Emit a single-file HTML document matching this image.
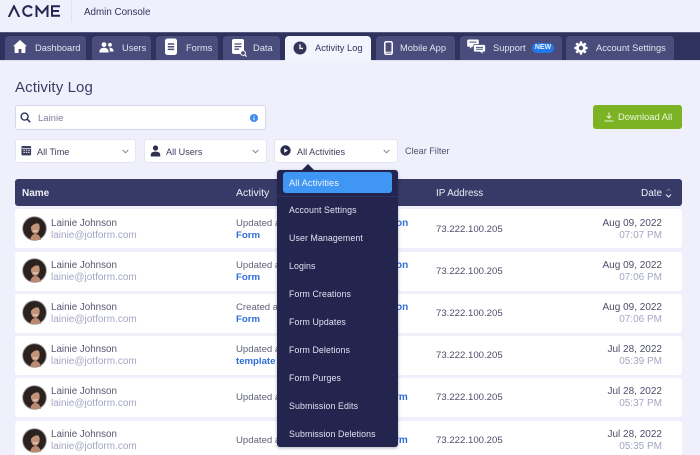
<!DOCTYPE html>
<html><head><meta charset="utf-8"><style>
*{box-sizing:border-box}
html,body{margin:0;padding:0}
html{width:700px;height:455px;overflow:hidden}
body{width:700px;height:455px;overflow:hidden;background:#f0f0fc;position:relative;font-family:"Liberation Sans",sans-serif;color:#343659}
.a{position:absolute;white-space:nowrap}
.tab{position:absolute;top:36px;height:24px;background:#4a4c7b;border-radius:4px 4px 0 0}
.tl{position:absolute;top:41px;margin-top:1px;font-size:9.3px;line-height:14px;color:#e4e4f2;white-space:nowrap}
.box{position:absolute;background:#fff;border:1px solid #dcdcf0;border-radius:3px}
.f{position:absolute;margin-top:1px;font-size:9.1px;line-height:13px;white-space:nowrap;color:#3c3e5e}
.row{position:absolute;left:15px;width:667px;height:39px;background:#fff;border-radius:3px}
.n{position:absolute;left:51px;margin-top:1px;font-size:9.8px;line-height:13px;color:#55576f;white-space:nowrap}
.m{position:absolute;left:51px;margin-top:1px;font-size:10px;line-height:13px;color:#a3a6c4;white-space:nowrap}
.ac{position:absolute;left:236px;margin-top:1px;font-size:9.6px;line-height:13px;color:#60627a;white-space:nowrap}
.lk{position:absolute;left:236px;margin-top:1px;font-size:9.6px;line-height:13px;font-weight:bold;color:#2f6fd8;white-space:nowrap}
.lk2{position:absolute;margin-top:1px;font-size:10px;line-height:13px;font-weight:bold;color:#2f6fd8;white-space:nowrap}
.ip{position:absolute;left:436px;margin-top:1px;font-size:9.6px;line-height:13px;color:#4c4e68;white-space:nowrap}
.d{position:absolute;right:38px;margin-top:1px;width:100px;text-align:right;font-size:10px;line-height:13px;color:#4c4e68}
.t{position:absolute;right:38px;margin-top:1px;width:100px;text-align:right;font-size:10px;line-height:13px;color:#a3a6c4}
.av{position:absolute;left:22px;width:25px;height:25px}
.mi{position:absolute;left:289px;font-size:8.8px;line-height:12px;color:#e2e2f2;white-space:nowrap;letter-spacing:.1px}
</style></head><body>

<svg class="a" style="left:8px;top:5px" width="53" height="12" viewBox="0 0 53 12"><path d="M.8 12L6 1.2L11.2 12" fill="none" stroke="#23264f" stroke-width="2"/><path d="M24 3A4.9 4.9 0 1 0 24 9" fill="none" stroke="#23264f" stroke-width="2"/><path d="M28.5 12V1.5L34 8L39.5 1.5V12" fill="none" stroke="#23264f" stroke-width="2"/><path d="M52 1.2H44V10.8H52M44 6H51" fill="none" stroke="#23264f" stroke-width="2"/></svg>
<div class="a" style="left:71px;top:1px;width:1px;height:21px;background:#e2e2f0"></div>
<div class="a" style="left:84px;top:6px;font-size:9.8px;line-height:14px;color:#30335c">Admin Console</div>

<div class="a" style="left:0;top:32px;width:700px;height:28px;background:#2f325c;border-top:1px solid #55587f"></div>
<div class="a" style="left:0;top:60px;width:700px;height:1px;background:#dedef2"></div>

<div class="tab" style="left:5px;width:81px"></div>
<div class="tab" style="left:92px;width:59px"></div>
<div class="tab" style="left:156px;width:62px"></div>
<div class="tab" style="left:223px;width:57px"></div>
<div class="tab" style="left:285px;width:86px;background:#f4f4fe;height:25px"></div>
<div class="tab" style="left:376px;width:79px"></div>
<div class="tab" style="left:460px;width:102px"></div>
<div class="tab" style="left:566px;width:108px"></div>

<div class="tl" style="left:35px;top:40px">Dashboard</div>
<div class="tl" style="left:122px;top:40px">Users</div>
<div class="tl" style="left:186px;top:40px">Forms</div>
<div class="tl" style="left:253px;top:40px">Data</div>
<div class="tl" style="left:315px;top:40px;color:#30335c">Activity Log</div>
<div class="tl" style="left:400px;top:40px">Mobile App</div>
<div class="tl" style="left:493px;top:40px">Support</div>
<div class="a" style="left:532px;top:43px;width:22px;height:10px;border-radius:5px;background:#2479e8;color:#e8f1ff;font-size:7px;line-height:10px;text-align:center;font-weight:bold">NEW</div>
<div class="tl" style="left:596px;top:40px">Account Settings</div>

<!-- tab icons -->
<svg class="a" style="left:13px;top:40px" width="14" height="13" viewBox="0 0 14 13"><path d="M7 0L14 6.2H12.4V13H8.4V9H5.6V13H1.6V6.2H0Z" fill="#fff"/></svg>
<svg class="a" style="left:99px;top:42px" width="15" height="11" viewBox="0 0 15 11"><circle cx="5" cy="2.6" r="2.4" fill="#fff"/><path d="M0.3 10.5C0.3 7 2.5 5.8 5 5.8S9.7 7 9.7 10.5Z" fill="#fff"/><circle cx="11" cy="2.8" r="1.9" fill="#fff"/><path d="M10.3 5.8C12.5 5.5 14.6 6.6 14.6 9.5H10.8C10.8 8 10.6 6.8 10.3 5.8Z" fill="#fff"/></svg>
<svg class="a" style="left:164px;top:38px" width="14" height="18" viewBox="0 0 14 18"><rect x="1" y="0.5" width="12" height="16.5" rx="2.5" fill="#fff"/><path d="M3.8 6H10.2M3.8 8.7H10.2M3.8 11.4H10.2" stroke="#4a4c7b" stroke-width="1.5"/></svg>
<svg class="a" style="left:231px;top:39px" width="17" height="19" viewBox="0 0 17 19"><rect x="1" y="0" width="12" height="15" rx="2" fill="#fff"/><path d="M3.5 5H10.5M3.5 7.6H10.5M3.5 10.2H8" stroke="#4a4c7b" stroke-width="1.3"/><circle cx="12" cy="14" r="2.4" fill="#4a4c7b" stroke="#fff" stroke-width="1"/><path d="M13.8 15.8L15.6 17.6" stroke="#fff" stroke-width="1.1"/></svg>
<svg class="a" style="left:293px;top:41px" width="14" height="14" viewBox="0 0 14 14"><circle cx="7" cy="7" r="6.5" fill="#343659"/><path d="M7 3.4V7.4H10" fill="none" stroke="#f4f4fe" stroke-width="1.4"/></svg>
<svg class="a" style="left:384px;top:41px" width="9" height="14" viewBox="0 0 9 14"><rect x="0.8" y="0.8" width="7.4" height="12.4" rx="1.4" fill="none" stroke="#fff" stroke-width="1.5"/><path d="M1 11.2H8" stroke="#fff" stroke-width="1"/></svg>
<svg class="a" style="left:467px;top:39px" width="19" height="17" viewBox="0 0 19 17"><path d="M1.5 .5H10.5A1.3 1.3 0 0 1 11.8 1.8V6.5A1.3 1.3 0 0 1 10.5 7.8H5L3 9.8V7.8H1.5A1.3 1.3 0 0 1 .2 6.5V1.8A1.3 1.3 0 0 1 1.5 .5Z" fill="#fff"/><path d="M2.5 3.1H9.5" stroke="#4a4c7b" stroke-width="1"/><path d="M8 5.5H17A1.5 1.5 0 0 1 18.5 7V11.5A1.5 1.5 0 0 1 17 13H15.8V15.6L13 13H8A1.5 1.5 0 0 1 6.5 11.5V7A1.5 1.5 0 0 1 8 5.5Z" fill="#fff" stroke="#4a4c7b" stroke-width=".7"/><path d="M9 8.4H16M9 10.3H16" stroke="#4a4c7b" stroke-width="1"/></svg>
<svg class="a" style="left:574px;top:41px" width="14" height="14" viewBox="0 0 14 14"><circle cx="7" cy="7" r="3.6" fill="none" stroke="#fff" stroke-width="2.8"/><path d="M7 .4V2.6M7 11.4V13.6M.4 7H2.6M11.4 7H13.6M2.3 2.3L3.9 3.9M10.1 10.1L11.7 11.7M2.3 11.7L3.9 10.1M10.1 3.9L11.7 2.3" stroke="#fff" stroke-width="2.4"/></svg>

<div class="a" style="left:15px;top:78px;font-size:15px;line-height:19px;color:#3a3c63;letter-spacing:.1px">Activity Log</div>

<!-- search -->
<div class="box" style="left:15px;top:105px;width:251px;height:24.5px;border-color:#d6d6ec"></div>
<svg class="a" style="left:20px;top:112px" width="11" height="11" viewBox="0 0 11 11"><circle cx="4.6" cy="4.6" r="3.5" fill="none" stroke="#30335c" stroke-width="1.4"/><path d="M7.2 7.2L10.2 10.2" stroke="#30335c" stroke-width="1.5"/></svg>
<div class="a" style="left:38px;top:112px;font-size:9.5px;line-height:13px;color:#7c7f9c">Lainie</div>
<svg class="a" style="left:250px;top:114px" width="8" height="8" viewBox="0 0 8 8"><circle cx="4" cy="4" r="4" fill="#3a8bf0"/><path d="M4 3.4V6.2M4 1.6V2.6" stroke="#fff" stroke-width="1"/></svg>

<!-- download -->
<div class="a" style="left:593px;top:105px;width:89px;height:24px;border-radius:3px;background:#7bb324"></div>
<svg class="a" style="left:604px;top:112px" width="10" height="10" viewBox="0 0 10 10"><path d="M5 .5V6M2.8 4L5 6.2L7.2 4M.5 9H9.5" fill="none" stroke="#e9f4d6" stroke-width="1"/></svg>
<div class="a" style="left:618px;top:110px;font-size:9.4px;line-height:14px;color:#eef6df">Download All</div>

<!-- filters -->
<div class="box" style="left:15px;top:139px;width:121px;height:24px;border-color:#e4e4f4"></div>
<svg class="a" style="left:21px;top:145px" width="11" height="11" viewBox="0 0 11 11"><rect x=".5" y="1" width="9.6" height="9.4" rx="1" fill="#3c3e5e"/><path d="M1 3.6H10" stroke="#fff" stroke-width=".7"/><path d="M2.4 5.2H3.8M4.8 5.2H6.2M7.2 5.2H8.6M2.4 7.4H3.8M4.8 7.4H6.2M7.2 7.4H8.6" stroke="#fff" stroke-width="1"/></svg>
<div class="f" style="left:37px;top:145px">All Time</div>
<svg class="a" style="left:122px;top:149px" width="7" height="5" viewBox="0 0 7 5"><path d="M.7 1L3.5 3.8L6.3 1" fill="none" stroke="#80829c" stroke-width="1"/></svg>

<div class="box" style="left:144px;top:139px;width:123px;height:24px;border-color:#e4e4f4"></div>
<svg class="a" style="left:150px;top:145px" width="11" height="12" viewBox="0 0 11 12"><circle cx="5.5" cy="3" r="2.6" fill="#2e3050"/><path d="M.8 11.5V9.6C.8 7.6 3 6.6 5.5 6.6S10.2 7.6 10.2 9.6V11.5Z" fill="#2e3050"/></svg>
<div class="f" style="left:166px;top:145px">All Users</div>
<svg class="a" style="left:252px;top:149px" width="7" height="5" viewBox="0 0 7 5"><path d="M.7 1L3.5 3.8L6.3 1" fill="none" stroke="#80829c" stroke-width="1"/></svg>

<div class="box" style="left:274px;top:139px;width:124px;height:24px;border-color:#e4e4f4"></div>
<svg class="a" style="left:280px;top:145px" width="11" height="11" viewBox="0 0 11 11"><circle cx="5.5" cy="5.5" r="5.2" fill="#2a2c4c"/><path d="M4.2 3.2L8 5.5L4.2 7.8Z" fill="#fff"/></svg>
<div class="f" style="left:297px;top:145px">All Activities</div>
<svg class="a" style="left:383px;top:149px" width="7" height="5" viewBox="0 0 7 5"><path d="M.7 1L3.5 3.8L6.3 1" fill="none" stroke="#80829c" stroke-width="1"/></svg>
<div class="f" style="left:405px;top:144px;color:#50526e">Clear Filter</div>

<!-- table header -->
<div class="a" style="left:15px;top:179px;width:667px;height:27px;background:#373a66;border-radius:3px"></div>
<div class="a" style="left:22px;top:187px;font-size:10px;line-height:14px;color:#eeeef8;font-weight:bold">Name</div>
<div class="a" style="left:236px;top:186px;font-size:10.5px;line-height:14px;color:#eeeef8">Activity</div>
<div class="a" style="left:436px;top:187px;font-size:9.8px;line-height:14px;color:#eeeef8">IP Address</div>
<div class="a" style="left:641px;top:187px;font-size:10px;line-height:14px;color:#eeeef8">Date</div>
<svg class="a" style="left:665px;top:188px" width="7" height="10" viewBox="0 0 7 10"><path d="M1.5 3L3.5 1L5.5 3" fill="none" stroke="#7a7ca0" stroke-width=".8"/><path d="M1 6.5L3.5 9L6 6.5" fill="none" stroke="#eeeef8" stroke-width="1"/></svg>

<svg width="0" height="0" style="position:absolute"><defs><symbol id="av" viewBox="0 0 25 25"><circle cx="12.5" cy="12.5" r="12.3" fill="#9a9a9e"/><circle cx="12.5" cy="12.5" r="11.4" fill="#2b211e"/><ellipse cx="13.3" cy="11.5" rx="4.4" ry="6.4" fill="#c39378"/><path d="M8 24C9 20 10.5 18 13.5 18S18 20 19 24Z" fill="#b98a70"/><path d="M8.5 8C10 4 16 4 18.5 8.5C15.5 6.5 12 7 9 11Z" fill="#2b211e"/><path d="M11 14.6Q13.3 16 15.6 14.4" stroke="#f0e4dc" stroke-width=".9" fill="none"/></symbol></defs></svg>

<!-- row 1 -->
<div class="row" style="top:209px"></div>
<svg class="av" style="top:216px"><use href="#av"/></svg>
<div class="n" style="top:216px">Lainie Johnson</div><div class="m" style="top:228px">lainie@jotform.com</div>
<div class="ac" style="top:216px">Updated a</div><div class="lk" style="top:228px">Form</div><div class="lk2" style="left:396px;top:216px">on</div>
<div class="ip" style="top:222px">73.222.100.205</div>
<div class="d" style="top:216px">Aug 09, 2022</div><div class="t" style="top:228px">07:07 PM</div>
<!-- row 2 -->
<div class="row" style="top:252px"></div>
<svg class="av" style="top:258px"><use href="#av"/></svg>
<div class="n" style="top:258px">Lainie Johnson</div><div class="m" style="top:270px">lainie@jotform.com</div>
<div class="ac" style="top:258px">Updated a</div><div class="lk" style="top:270px">Form</div><div class="lk2" style="left:396px;top:258px">on</div>
<div class="ip" style="top:264px">73.222.100.205</div>
<div class="d" style="top:258px">Aug 09, 2022</div><div class="t" style="top:270px">07:06 PM</div>
<!-- row 3 -->
<div class="row" style="top:294px"></div>
<svg class="av" style="top:300px"><use href="#av"/></svg>
<div class="n" style="top:300px">Lainie Johnson</div><div class="m" style="top:312px">lainie@jotform.com</div>
<div class="ac" style="top:300px">Created a</div><div class="lk" style="top:312px">Form</div><div class="lk2" style="left:396px;top:300px">on</div>
<div class="ip" style="top:306px">73.222.100.205</div>
<div class="d" style="top:300px">Aug 09, 2022</div><div class="t" style="top:312px">07:06 PM</div>
<!-- row 4 -->
<div class="row" style="top:336px"></div>
<svg class="av" style="top:343px"><use href="#av"/></svg>
<div class="n" style="top:342px">Lainie Johnson</div><div class="m" style="top:354px">lainie@jotform.com</div>
<div class="ac" style="top:342px">Updated a</div><div class="lk" style="top:354px">template</div>
<div class="ip" style="top:348px">73.222.100.205</div>
<div class="d" style="top:342px">Jul 28, 2022</div><div class="t" style="top:354px">05:39 PM</div>
<!-- row 5 -->
<div class="row" style="top:378px"></div>
<svg class="av" style="top:385px"><use href="#av"/></svg>
<div class="n" style="top:384px">Lainie Johnson</div><div class="m" style="top:396px">lainie@jotform.com</div>
<div class="ac" style="top:390px">Updated a</div><div class="lk2" style="left:395px;top:390px">rm</div>
<div class="ip" style="top:390px">73.222.100.205</div>
<div class="d" style="top:384px">Jul 28, 2022</div><div class="t" style="top:396px">05:37 PM</div>
<!-- row 6 -->
<div class="row" style="top:421px"></div>
<svg class="av" style="top:428px"><use href="#av"/></svg>
<div class="n" style="top:427px">Lainie Johnson</div><div class="m" style="top:439px">lainie@jotform.com</div>
<div class="ac" style="top:433px">Updated a</div><div class="lk2" style="left:395px;top:433px">rm</div>
<div class="ip" style="top:433px">73.222.100.205</div>
<div class="d" style="top:427px">Jul 28, 2022</div><div class="t" style="top:439px">05:35 PM</div>

<!-- dropdown -->
<div class="a" style="left:277px;top:170px;width:121px;height:277px;background:#23254f;border-radius:3px;box-shadow:0 1px 3px rgba(30,30,70,.35)"></div>
<div class="a" style="left:302px;top:164px;width:0;height:0;border-left:6px solid transparent;border-right:6px solid transparent;border-bottom:6px solid #23254f"></div>
<div class="a" style="left:283px;top:172px;width:109px;height:21px;background:#3f96f3;border-radius:3px"></div>
<div class="a" style="left:277px;top:196px;width:121px;height:1px;background:#2f3160"></div>
<div class="mi" style="top:177px;color:#eef5ff;font-size:9.2px">All Activities</div>
<div class="mi" style="top:204px">Account Settings</div>
<div class="mi" style="top:232px">User Management</div>
<div class="mi" style="top:260px">Logins</div>
<div class="mi" style="top:288px">Form Creations</div>
<div class="mi" style="top:316px">Form Updates</div>
<div class="mi" style="top:344px">Form Deletions</div>
<div class="mi" style="top:372px">Form Purges</div>
<div class="mi" style="top:400px">Submission Edits</div>
<div class="mi" style="top:428px">Submission Deletions</div>

</body></html>
